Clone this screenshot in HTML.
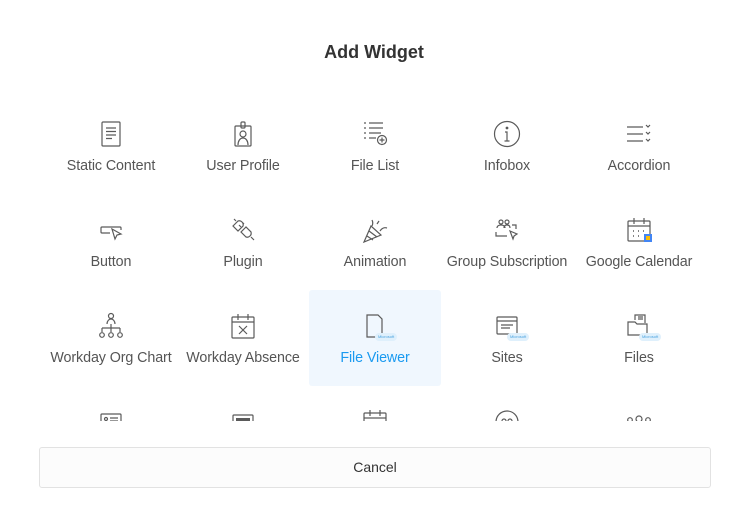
<!DOCTYPE html>
<html><head><meta charset="utf-8"><style>
*{box-sizing:border-box;margin:0;padding:0}
body{width:748px;height:521px;background:#fff;font-family:"Liberation Sans",sans-serif;position:relative;overflow:hidden}
.t{position:absolute;top:42px;left:0;width:748px;text-align:center;font-size:18px;font-weight:bold;color:#333}
.grid{position:absolute;left:45px;top:98px;width:660px;height:323px;overflow:hidden}
.c{position:absolute;width:132px;height:96px;text-align:center;border-radius:3px}
.c svg{position:absolute;left:52px;top:22px;width:28px;height:28px}
.c span{position:absolute;left:0;right:0;top:60px;font-size:14.3px;color:#555;white-space:nowrap;letter-spacing:-0.1px}
.sel{background:#f0f7fe}
.sel span{color:#1a9af0}
.b{position:absolute;font-size:4px;color:#4aa3e0;background:#dff0fc;border-radius:5px;padding:1px 3px;line-height:6px}
.btn{position:absolute;left:39px;top:447px;width:672px;height:41px;border:1px solid #e2e2e2;border-radius:3px;background:#fcfcfc;text-align:center;line-height:39px;font-size:14px;color:#333}
svg{stroke:#5a5a5a}
</style></head><body>
<div class="t">Add Widget</div>
<div class="grid">
<div class="c" style="left:0;top:0"><svg viewBox="0 0 28 28" fill="none" stroke-width="1.2"><rect x="5" y="2" width="18" height="24" rx="1"/><path d="M9 8h10M9 11.5h10M9 15h10M9 18.5h6"/></svg><span>Static Content</span></div>
<div class="c" style="left:132px;top:0"><svg viewBox="0 0 28 28" fill="none" stroke-width="1.2"><rect x="6" y="6" width="16" height="20" rx="1"/><rect x="12" y="2" width="4" height="6" rx="1"/><circle cx="14" cy="14" r="3"/><path d="M9 25c0-4 2-7 5-7s5 3 5 7"/></svg><span>User Profile</span></div>
<div class="c" style="left:264px;top:0"><svg viewBox="0 0 28 28" fill="none" stroke-width="1.2"><path d="M3 3h2M8 3h14M3 8h2M8 8h14M3 13h2M8 13h12M3 18h2M8 18h7"/><circle cx="21" cy="20" r="4.5"/><path d="M21 17.5v5M18.5 20h5"/></svg><span>File List</span></div>
<div class="c" style="left:396px;top:0"><svg viewBox="0 0 28 28" fill="none" stroke-width="1.2"><circle cx="14" cy="14" r="12.5"/><circle cx="14" cy="8" r=".8" fill="#555"/><path d="M12 12h2v9M11.5 21h5"/></svg><span>Infobox</span></div>
<div class="c" style="left:528px;top:0"><svg viewBox="0 0 28 28" fill="none" stroke-width="1.2"><path d="M2 7h16M2 14h16M2 21h16M21 5l2 2 2-2M21 12l2 2 2-2M21 19l2 2 2-2"/></svg><span>Accordion</span></div>
<div class="c" style="left:0;top:96px"><svg viewBox="0 0 28 28" fill="none" stroke-width="1.2"><path d="M13 17H5a1 1 0 0 1-1-1v-4a1 1 0 0 1 1-1h18a1 1 0 0 1 1 1v2"/><path d="M15 13l9 5-4 1-2 4z"/></svg><span>Button</span></div>
<div class="c" style="left:132px;top:96px"><svg viewBox="0 0 28 28" fill="none" stroke-width="1.2"><path d="M5 3l2 2M4 10l5-5a4 4 0 0 1 5 5l-5 5zM12 16l5-5 5 5a4 4 0 0 1-5 5zM22 21l3 3M12 11l-2-2M15 8l-2-2"/></svg><span>Plugin</span></div>
<div class="c" style="left:264px;top:96px"><svg viewBox="0 0 28 28" fill="none" stroke-width="1.2"><path d="M3 26L10 10l10 9z"/><path d="M6 20l6 4M8 15l8 6M11 4c1 2 1 4 0 6M19 15c2-3 4-4 7-3M16 8l2-3"/></svg><span>Animation</span></div>
<div class="c" style="left:396px;top:96px"><svg viewBox="0 0 28 28" fill="none" stroke-width="1.2"><circle cx="8" cy="6" r="2"/><circle cx="14" cy="6" r="2"/><path d="M4 12c0-2 2-3 4-3s4 1 4 3M11 12c0-2 1-3 3-3s3 1 3 3M3 16v4h11M19 9h4v4M17 15l7 3-3 2-1 3z"/></svg><span>Group Subscription</span></div>
<div class="c" style="left:528px;top:96px"><svg viewBox="0 0 28 28" fill="none" stroke-width="1.2"><rect x="3" y="5" width="22" height="20" rx="1"/><path d="M3 10h22M9 2v6M19 2v6"/><path d="M8 15h1M13 15h1M18 15h1M8 20h1M13 20h1" stroke-width="1.5"/><rect x="19" y="18" width="8" height="8" fill="#4285f4" stroke="none"/><rect x="21" y="20" width="4" height="4" fill="#fbbc04" stroke="none"/></svg><span>Google Calendar</span></div>
<div class="c" style="left:0;top:192px"><svg viewBox="0 0 28 28" fill="none" stroke-width="1.2"><circle cx="14" cy="4" r="2.5"/><path d="M10 12c0-3 2-5 4-5s4 2 4 5M14 12v4M5 16h18M5 16v4M14 16v4M23 16v4"/><circle cx="5" cy="23" r="2.3"/><circle cx="14" cy="23" r="2.3"/><circle cx="23" cy="23" r="2.3"/></svg><span>Workday Org Chart</span></div>
<div class="c" style="left:132px;top:192px"><svg viewBox="0 0 28 28" fill="none" stroke-width="1.2"><rect x="3" y="5" width="22" height="21" rx="1"/><path d="M3 10h22M9 2v6M19 2v6M10 14l8 8M18 14l-8 8"/></svg><span>Workday Absence</span></div>
<div class="c sel" style="left:264px;top:192px"><svg viewBox="0 0 28 28" fill="none" stroke-width="1.2"><path d="M6 3h11l4 4v18H6z"/></svg><div class="b" style="left:66px;top:43px">Microsoft</div><span>File Viewer</span></div>
<div class="c" style="left:396px;top:192px"><svg viewBox="0 0 28 28" fill="none" stroke-width="1.2"><rect x="4" y="5" width="20" height="17" rx="1"/><path d="M4 9h20M8 13h12M8 16h9"/></svg><div class="b" style="left:66px;top:43px">Microsoft</div><span>Sites</span></div>
<div class="c" style="left:528px;top:192px"><svg viewBox="0 0 28 28" fill="none" stroke-width="1.2"><path d="M10 8V3h10v8M13 5h5M13 7h5M3 10h7l2 2h10v11H3z"/></svg><div class="b" style="left:66px;top:43px">Microsoft</div><span>Files</span></div>
<div class="c" style="left:0;top:288px"><svg viewBox="0 0 28 28" fill="none" stroke-width="1.2"><rect x="4" y="6" width="20" height="18" rx="1"/><circle cx="9" cy="11" r="1.5"/><path d="M13 10h8M13 13h8M7 16c0-2 1-2 2-2s2 0 2 2"/></svg></div>
<div class="c" style="left:132px;top:288px"><svg viewBox="0 0 28 28" fill="none" stroke-width="1.2"><rect x="4" y="7" width="20" height="16" rx="1"/><path d="M7 11h14M7 13h14" stroke-width="2"/></svg></div>
<div class="c" style="left:264px;top:288px"><svg viewBox="0 0 28 28" fill="none" stroke-width="1.2"><rect x="3" y="5" width="22" height="20" rx="1"/><path d="M3 10h22M9 2v6M19 2v6"/></svg></div>
<div class="c" style="left:396px;top:288px"><svg viewBox="0 0 28 28" fill="none" stroke-width="1.2"><circle cx="14" cy="14" r="11"/><circle cx="11" cy="13" r="2"/><circle cx="17" cy="13" r="2"/></svg></div>
<div class="c" style="left:528px;top:288px"><svg viewBox="0 0 28 28" fill="none" stroke-width="1.2"><circle cx="5" cy="12" r="2.3"/><circle cx="14" cy="11" r="3"/><circle cx="23" cy="12" r="2.3"/></svg></div>
</div>
<div class="btn">Cancel</div>
</body></html>
